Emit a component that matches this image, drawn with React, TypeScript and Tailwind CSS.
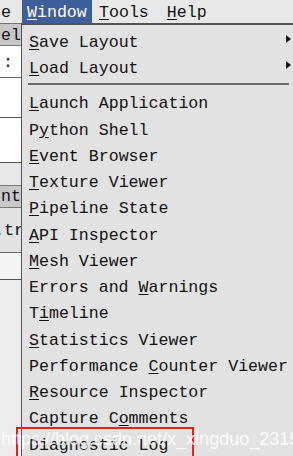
import React from "react";

type Item = { label: string; u: number; sub?: boolean } | { sep: true };

const items: Item[] = [
  { label: "Save Layout", u: 0, sub: true },
  { label: "Load Layout", u: 0, sub: true },
  { sep: true },
  { label: "Launch Application", u: 0 },
  { label: "Python Shell", u: 1 },
  { label: "Event Browser", u: 0 },
  { label: "Texture Viewer", u: 0 },
  { label: "Pipeline State", u: 0 },
  { label: "API Inspector", u: 0 },
  { label: "Mesh Viewer", u: 0 },
  { label: "Errors and Warnings", u: 11 },
  { label: "Timeline", u: 1 },
  { label: "Statistics Viewer", u: 0 },
  { label: "Performance Counter Viewer", u: 12 },
  { label: "Resource Inspector", u: 0 },
  { label: "Capture Comments", u: 9 },
  { label: "Diagnostic Log", u: -1 },
];

function Mn({ text, u }: { text: string; u: number }) {
  if (u < 0) return <>{text}</>;
  return (
    <>
      {text.slice(0, u)}
      <span className="underline underline-offset-2 decoration-1">{text[u]}</span>
      {text.slice(u + 1)}
    </>
  );
}

export default function App() {
  return (
    <div className="w-[293px] h-[456px] relative overflow-hidden bg-[#ececec] font-['Liberation_Mono',monospace] text-[16.6px] text-[#111] leading-none whitespace-pre">
      {/* menu bar */}
      <div className="h-[23px] flex items-stretch bg-[#e8e8e8]">
        <div className="w-[22px] flex items-center pl-[1px] pt-[3px]">e</div>
        <div className="w-[70px] bg-[#3f5e9c] text-white flex items-center pl-[5px] pt-[3px]">
          <Mn text="Window" u={0} />
        </div>
        <div className="flex items-center pl-[7px] pt-[3px]">
          <Mn text="Tools" u={0} />
        </div>
        <div className="flex items-center pl-[18px] pt-[3px]">
          <Mn text="Help" u={0} />
        </div>
      </div>

      <div className="flex h-[433px]">
        {/* left strip: window behind */}
        <div className="w-[21px] flex flex-col overflow-hidden">
          <div className="h-[23px] bg-[#c8c8c8] border-t border-b border-[#777] flex items-center justify-end pt-[3px]">el</div>
          <div className="h-[32px] bg-white border-b border-[#666] flex items-center pl-[3px] pt-[4px]">:</div>
          <div className="h-[40px] bg-white border-b border-[#555]"></div>
          <div className="h-[45px] bg-white border-b border-[#555]"></div>
          <div className="h-[22px] bg-[#e8e8e8]"></div>
          <div className="h-[23px] bg-[#c8c8c8] border-y border-[#777] flex items-center justify-end pt-[2px]">nt</div>
          <div className="h-[45px] bg-[#e2e2e2] border-b border-[#666] flex items-center justify-end pt-[2px]">
            <span className="-mr-[3px]">.tr</span>
          </div>
          <div className="h-[27px] bg-[#f4f4f4] border-b border-[#555]"></div>
          <div className="flex-1 bg-[#ececec]"></div>
        </div>

        {/* dropdown menu */}
        <div className="flex-1 bg-[#e2e2e2] border-l border-t-2 border-[#555] pt-[2px] flex flex-col">
          {items.map((it, i) =>
            "sep" in it ? (
              <div key={i} className="h-[9.5px] flex items-center pl-[6px] pr-[4px]">
                <div className="h-[2px] w-full bg-[#6a6a6a]" />
              </div>
            ) : (
              <div key={i} className="h-[26.25px] shrink-0 flex items-center pl-[7px] pr-[2px]">
                <span className="flex-1 pt-[6px]">
                  <Mn text={it.label} u={it.u} />
                </span>
                {it.sub && (
                  <svg width="5" height="8" viewBox="0 0 5 8" className="mb-[2px]">
                    <path d="M0 0 L5 4 L0 8 Z" fill="#111" />
                  </svg>
                )}
              </div>
            )
          )}
        </div>
      </div>

      {/* red annotation box */}
      <div className="absolute left-[16px] top-[427px] w-[178px] h-[40px] border-2 border-[#e0201c]" />

      {/* watermark */}
      <div className="absolute left-[1px] top-[430px] font-['Liberation_Sans',sans-serif] text-[18px] leading-none text-white/80">
        https://blog.csdn.net/x_xingduo_2315
      </div>
    </div>
  );
}
